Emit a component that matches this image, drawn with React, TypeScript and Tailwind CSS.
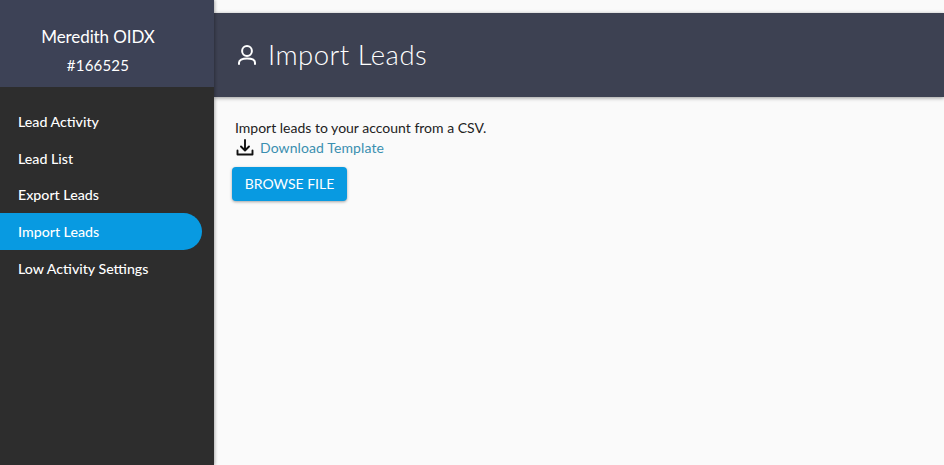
import React from 'react';

const navItems = ['Lead Activity', 'Lead List', 'Export Leads', 'Import Leads', 'Low Activity Settings'];

const App: React.FC = () => {
  return (
    <div className="flex h-[465px] w-[944px] overflow-hidden bg-[#fafafa] font-['Lato',sans-serif]">
      <aside className="z-20 flex h-full w-[214px] shrink-0 flex-col bg-[#2d2d2d] shadow-[1px_0_3px_rgba(0,0,0,0.3)]">
        <div className="flex h-[87px] flex-col items-center bg-[#3d4256] pr-[18px] pt-[25px] text-white">
          <div className="text-[17px] leading-[24px] tracking-[-0.1px]">Meredith OIDX</div>
          <div className="mt-[4px] text-[15px] leading-[24px] tracking-[0.2px]">#166525</div>
        </div>
        <nav className="flex flex-col pt-[16.6px]">
          {navItems.map((item) => (
            <div
              key={item}
              className={`flex h-[36.6px] w-[202px] items-center rounded-r-full pl-[18px] text-[14.2px] font-medium text-white ${
                item === 'Import Leads' ? 'bg-[#089ae1]' : ''
              }`}
            >
              {item}
            </div>
          ))}
        </nav>
      </aside>
      <main className="flex min-w-0 flex-1 flex-col">
        <div className="h-[13px] shrink-0 bg-[#fafafa]" />
        <header className="z-10 flex h-[84px] shrink-0 items-center bg-[#3d4152] pl-[24px] text-white shadow-[0_1px_4px_rgba(0,0,0,0.4)]">
          <svg width="18" height="20" viewBox="0 0 18 20" fill="none" stroke="currentColor" strokeWidth="2" strokeLinecap="round">
            <circle cx="9" cy="6" r="4.9" />
            <path d="M1 19v-1.2c0-2.6 3-4.3 8-4.3s8 1.7 8 4.3V19" />
          </svg>
          <h1 className="ml-[12px] text-[27.5px] font-light tracking-[0.5px]">Import Leads</h1>
        </header>
        <section className="flex flex-col items-start pl-[18px] pt-[22px]">
          <p className="pl-[3px] text-[14px] leading-[18px] text-[#222]">Import leads to your account from a CSV.</p>
          <div className="mt-[1px] flex items-center pl-[3px]">
            <svg width="20" height="20" viewBox="0 0 20 20" fill="none" stroke="#111" strokeWidth="1.9" strokeLinecap="round" strokeLinejoin="round">
              <path d="M10 2v10M6 8.5l4 4 4-4M2.5 12.5v4h15v-4" />
            </svg>
            <a className="ml-[5px] text-[14px] leading-[20px] tracking-[0.1px] text-[#3a8fb0]">Download Template</a>
          </div>
          <button className="mt-[9px] h-[34px] w-[115px] rounded-[4px] bg-[#089ae1] pb-[1px] text-[14px] font-normal text-white shadow-[0_1px_3px_rgba(0,0,0,0.35)]">
            BROWSE FILE
          </button>
        </section>
      </main>
    </div>
  );
};

export default App;
